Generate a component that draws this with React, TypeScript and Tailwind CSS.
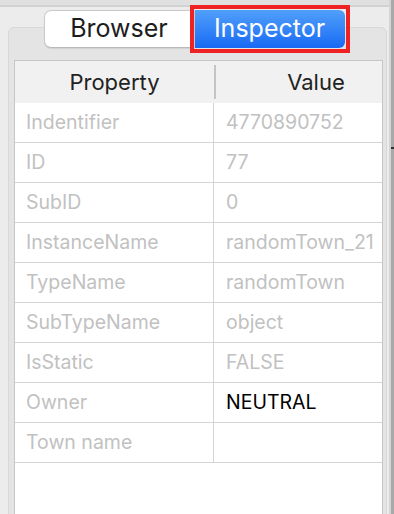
import React from "react";

const rows: { k: string; v: string; dark?: boolean }[] = [
  { k: "Indentifier", v: "4770890752" },
  { k: "ID", v: "77" },
  { k: "SubID", v: "0" },
  { k: "InstanceName", v: "randomTown_21" },
  { k: "TypeName", v: "randomTown" },
  { k: "SubTypeName", v: "object" },
  { k: "IsStatic", v: "FALSE" },
  { k: "Owner", v: "NEUTRAL", dark: true },
  { k: "Town name", v: "" },
];

export default function App() {
  return (
    <div
      className="w-[394px] h-[514px] overflow-hidden bg-[#ececec] flex relative"
      style={{ fontFamily: "Inter, 'Noto Sans', sans-serif" }}
    >
      <div className="flex-1 flex flex-col min-w-0">
        <div className="h-[7px] shrink-0 bg-[#e0e0e0] border-b-2 border-[#d2d2d2]" />
        <div className="relative z-10 flex justify-center mt-[3px] h-[38px] shrink-0 pr-[1px]">
          <div className="w-[151px] h-[38px] bg-white border border-[#c9c9c9] border-b-[#b9b9b9] rounded-l-[7px] flex items-center justify-center text-[25px] text-[#1d1d1d] shadow-[0_1px_1px_rgba(0,0,0,0.08)]">
            Browser
          </div>
          <div className="relative w-[150px] h-[38px] rounded-r-[6px] bg-gradient-to-b from-[#519ffb] to-[#1769f4] flex items-center justify-center text-[25px] text-white">
            Inspector
            <div className="absolute -inset-[5px] border-4 border-[#ee2222]" />
          </div>
        </div>
        <div className="mt-[-21px] ml-[8px] mr-[2px] h-[520px] shrink-0 bg-[#e4e4e4] border border-[#d8d8d8] rounded-[6px] pt-[32px] pl-[5px] pr-[3px]">
          <div className="h-full bg-white border border-[#c6c6c6] overflow-hidden">
            <div className="h-[42px] bg-[#f1f1f1] flex items-center text-[22px] text-[#222]">
              <div className="w-[199px] shrink-0 text-center">Property</div>
              <div className="w-[2px] h-[34px] bg-[#c4c4c4] shrink-0" />
              <div className="w-[200px] shrink-0 text-center">Value</div>
            </div>
            {rows.map((r) => (
              <div key={r.k} className="h-[40px] flex border-b border-[#d4d4d4] text-[19.5px]">
                <div className="w-[199px] shrink-0 border-r border-[#d4d4d4] pl-[11px] flex items-center text-[#c1c1c1] whitespace-nowrap overflow-hidden">
                  {r.k}
                </div>
                <div
                  className={
                    r.dark
                      ? "flex-1 pl-[12px] flex items-center text-black whitespace-nowrap overflow-hidden"
                      : "flex-1 pl-[12px] flex items-center text-[#c1c1c1] whitespace-nowrap overflow-hidden"
                  }
                >
                  {r.v}
                </div>
              </div>
            ))}
          </div>
        </div>
      </div>
      <div className="w-[5px] shrink-0 flex">
        <div className="w-[2px] bg-[#d4d4d4]" />
        <div className="w-[3px] bg-[#a9a9a9] relative">
          <div className="absolute left-0 top-[147px] w-[3px] h-[2px] bg-[#333]" />
        </div>
      </div>
    </div>
  );
}
